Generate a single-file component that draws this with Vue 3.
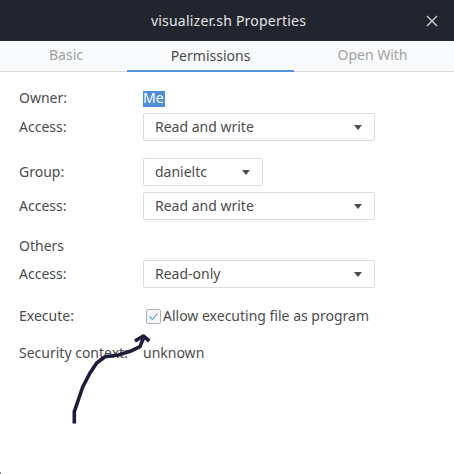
<template>
  <div class="dialog">
    <header class="titlebar">
      <span class="title">visualizer.sh Properties</span>
      <svg class="close" width="14" height="14" viewBox="0 0 14 14" fill="none" stroke="#d6d7da" stroke-width="1.2">
        <path d="M2 2 L12 12 M12 2 L2 12" />
      </svg>
    </header>

    <nav class="tabs">
      <div v-for="tab in tabs" :key="tab" class="tab" :class="{ active: tab === 'Permissions' }">{{ tab }}</div>
    </nav>

    <main class="content">
      <div class="row owner">
        <span class="label">Owner:</span>
        <span class="selected">Me</span>
      </div>
      <div class="row access">
        <span class="label">Access:</span>
        <div class="select wide"><span>Read and write</span><i class="caret"></i></div>
      </div>

      <div class="row group">
        <span class="label">Group:</span>
        <div class="select narrow"><span>danieltc</span><i class="caret"></i></div>
      </div>
      <div class="row access-tight">
        <span class="label">Access:</span>
        <div class="select wide"><span>Read and write</span><i class="caret"></i></div>
      </div>

      <div class="row others">
        <span class="label">Others</span>
      </div>
      <div class="row access-last">
        <span class="label">Access:</span>
        <div class="select wide"><span>Read-only</span><i class="caret"></i></div>
      </div>

      <div class="row execute">
        <span class="label">Execute:</span>
        <label class="check">
          <span class="box">
            <svg width="11" height="11" viewBox="0 0 11 11" fill="none" stroke="#6f97d0" stroke-width="1.1">
              <path d="M1.5 5.5 L4.5 8.5 L9.5 2.5" />
            </svg>
          </span>
          <span class="check-text">Allow executing file as program</span>
        </label>
      </div>

      <div class="row security">
        <span class="label">Security context:</span>
        <span class="value">unknown</span>
      </div>
    </main>

    <!-- hand drawn arrow on top of the screenshot -->
    <svg class="arrow" width="90" height="100" viewBox="0 0 90 100" fill="none" stroke="#1d1c3a" stroke-width="3.6" stroke-linejoin="round">
      <path d="M4.3 93.5 L4.3 81.7 L8.3 70 L12.7 57 L20 43 L26.7 33 L35 26.7 L48.3 25 L61.7 20.7 L70 16.7 L73.3 8.3" />
      <path d="M65 11 L73.3 6 L79.3 11" />
    </svg>
    <i class="corner"></i>
  </div>
</template>

<script setup>
const tabs = ['Basic', 'Permissions', 'Open With']
</script>

<style>
html,
body {
  margin: 0;
  background: #fff;
}
</style>

<style scoped>
.dialog {
  position: relative;
  width: 454px;
  height: 474px;
  overflow: hidden;
  background: #fff;
  color: #4b4b4d;
  font-family: "Noto Sans", sans-serif;
  font-size: 14px;
}

.titlebar {
  position: relative;
  height: 41px;
  display: flex;
  align-items: center;
  justify-content: center;
  background: #23252e;
  color: #e4e4e6;
}

.title {
  padding-left: 3px;
  letter-spacing: 0.22px;
}

.close {
  position: absolute;
  right: 15px;
  top: 14px;
}

.tabs {
  display: flex;
  height: 30px;
  background: #f9fafb;
  border-bottom: 1px solid #d9d9d9;
}

.tab {
  width: 127px;
  display: flex;
  align-items: center;
  justify-content: center;
  padding-bottom: 3px;
  box-sizing: border-box;
  color: #a0a0a2;
}

.tab:nth-child(1) {
  padding-left: 5px;
}

.tab:nth-child(2) {
  width: 167px;
}

.tab:nth-child(3) {
  width: 160px;
  padding-right: 3px;
}

.tab.active {
  color: #4b4b4d;
  box-shadow: inset 0 -2px 0 #5294e2;
  height: 31px;
}

.content {
  padding: 0 19px;
}

.row {
  display: grid;
  grid-template-columns: 124px 1fr;
  align-items: center;
}

.label,
.value,
.check-text,
.select span {
  margin-top: -2px;
}

.owner {
  height: 20px;
  margin-top: 16px;
}

.selected {
  justify-self: start;
  align-self: start;
  height: 16px;
  margin-top: 3px;
  padding-right: 1px;
  line-height: 14px;
  background: #4f8edc;
  color: #fff;
}

.access {
  margin-top: 5px;
}

.group {
  margin-top: 17px;
}

.access-tight {
  margin-top: 6px;
}

.access-last {
  margin-top: 4px;
}

.others {
  height: 20px;
  margin-top: 16px;
}

.execute {
  height: 20px;
  margin-top: 18px;
}

.security {
  height: 20px;
  margin-top: 17px;
}

.select {
  height: 28px;
  box-sizing: border-box;
  display: flex;
  align-items: center;
  justify-content: space-between;
  padding: 0 12px 0 11px;
  border: 1px solid #dcdcdc;
  border-radius: 2px;
  background: #fff;
}

.wide {
  width: 232px;
}

.narrow {
  width: 120px;
}

.caret {
  width: 0;
  height: 0;
  border-left: 4.5px solid transparent;
  border-right: 4.5px solid transparent;
  border-top: 5px solid #4b4b4d;
}

.check {
  display: flex;
  align-items: center;
  gap: 2px;
  padding-left: 3px;
}

.box {
  width: 15px;
  height: 15px;
  box-sizing: border-box;
  display: flex;
  align-items: center;
  justify-content: center;
  border: 1px solid #aeb1b8;
  border-radius: 2px;
  background: #f4f6f9;
}

.arrow {
  position: absolute;
  left: 70px;
  top: 330px;
}

.corner {
  position: absolute;
  left: 0;
  bottom: 0;
  width: 1px;
  height: 2px;
  background: #8a8a8a;
}
</style>
